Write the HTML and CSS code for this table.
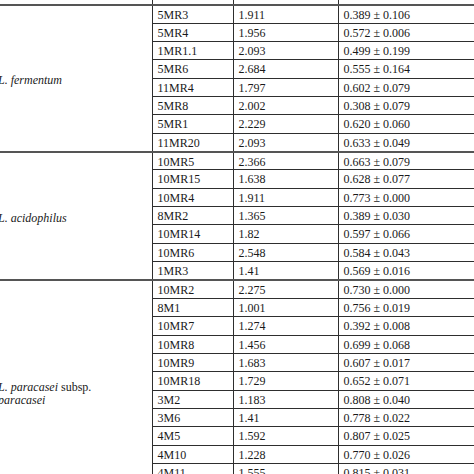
FILE: index.html
```html
<!DOCTYPE html>
<html>
<head>
<meta charset="utf-8">
<link rel="stylesheet" href="styles.css">
</head>
<body>
<table class="tbl">
  <colgroup>
    <col class="c1"><col class="c2"><col class="c3"><col class="c4">
  </colgroup>
  <tbody>
    <tr><td class="sp"></td><td>10MR12</td><td>2.047</td><td>0.713 ± 0.053</td></tr>

    <tr class="g"><td class="sp" rowspan="8"><i>L. fermentum</i></td><td>5MR3</td><td>1.911</td><td>0.389 ± 0.106</td></tr>
    <tr><td>5MR4</td><td>1.956</td><td>0.572 ± 0.006</td></tr>
    <tr><td>1MR1.1</td><td>2.093</td><td>0.499 ± 0.199</td></tr>
    <tr><td>5MR6</td><td>2.684</td><td>0.555 ± 0.164</td></tr>
    <tr><td>11MR4</td><td>1.797</td><td>0.602 ± 0.079</td></tr>
    <tr><td>5MR8</td><td>2.002</td><td>0.308 ± 0.079</td></tr>
    <tr><td>5MR1</td><td>2.229</td><td>0.620 ± 0.060</td></tr>
    <tr><td>11MR20</td><td>2.093</td><td>0.633 ± 0.049</td></tr>

    <tr class="g"><td class="sp" rowspan="7"><i>L. acidophilus</i></td><td>10MR5</td><td>2.366</td><td>0.663 ± 0.079</td></tr>
    <tr><td>10MR15</td><td>1.638</td><td>0.628 ± 0.077</td></tr>
    <tr><td>10MR4</td><td>1.911</td><td>0.773 ± 0.000</td></tr>
    <tr><td>8MR2</td><td>1.365</td><td>0.389 ± 0.030</td></tr>
    <tr><td>10MR14</td><td>1.82</td><td>0.597 ± 0.066</td></tr>
    <tr><td>10MR6</td><td>2.548</td><td>0.584 ± 0.043</td></tr>
    <tr><td>1MR3</td><td>1.41</td><td>0.569 ± 0.016</td></tr>

    <tr class="g"><td class="sp sp-low" rowspan="12"><i>L. paracasei</i> subsp.<br><i>paracasei</i></td><td>10MR2</td><td>2.275</td><td>0.730 ± 0.000</td></tr>
    <tr><td>8M1</td><td>1.001</td><td>0.756 ± 0.019</td></tr>
    <tr><td>10MR7</td><td>1.274</td><td>0.392 ± 0.008</td></tr>
    <tr><td>10MR8</td><td>1.456</td><td>0.699 ± 0.068</td></tr>
    <tr><td>10MR9</td><td>1.683</td><td>0.607 ± 0.017</td></tr>
    <tr><td>10MR18</td><td>1.729</td><td>0.652 ± 0.071</td></tr>
    <tr><td>3M2</td><td>1.183</td><td>0.808 ± 0.040</td></tr>
    <tr><td>3M6</td><td>1.41</td><td>0.778 ± 0.022</td></tr>
    <tr><td>4M5</td><td>1.592</td><td>0.807 ± 0.025</td></tr>
    <tr><td>4M10</td><td>1.228</td><td>0.770 ± 0.026</td></tr>
    <tr><td>4M11</td><td>1.555</td><td>0.815 ± 0.031</td></tr>
    <tr><td>4M14</td><td>1.302</td><td>0.744 ± 0.012</td></tr>
  </tbody>
</table>
</body>
</html>
```

FILE: styles.css
```css
html, body {
  margin: 0;
  padding: 0;
  background: #ffffff;
  overflow: hidden;
}

body {
  font-family: "Liberation Serif", "Times New Roman", serif;
  font-size: 12px;
  color: #1a1a1a;
}

.tbl {
  border-collapse: collapse;
  table-layout: fixed;
  width: 620px;
  margin-left: -9px;
  margin-top: -14px;
}

.c1 { width: 161px; }
.c2 { width: 81px; }
.c3 { width: 105px; }
.c4 { width: 273px; }

.tbl td {
  border: 1px solid #2e2e2e;
  height: 18.35px;
  box-sizing: border-box;
  padding: 3px 4px 0 5px;
  line-height: 13px;
  vertical-align: top;
  white-space: nowrap;
  overflow: hidden;
}

.tbl td.sp {
  border-left: none;
  vertical-align: middle;
  padding: 5px 0 0 7px;
  white-space: normal;
  line-height: 13px;
}

.tbl td.sp-low {
  padding-top: 8px;
}

.tbl tr.g td {
  border-top: 2px solid #555555;
}
```
